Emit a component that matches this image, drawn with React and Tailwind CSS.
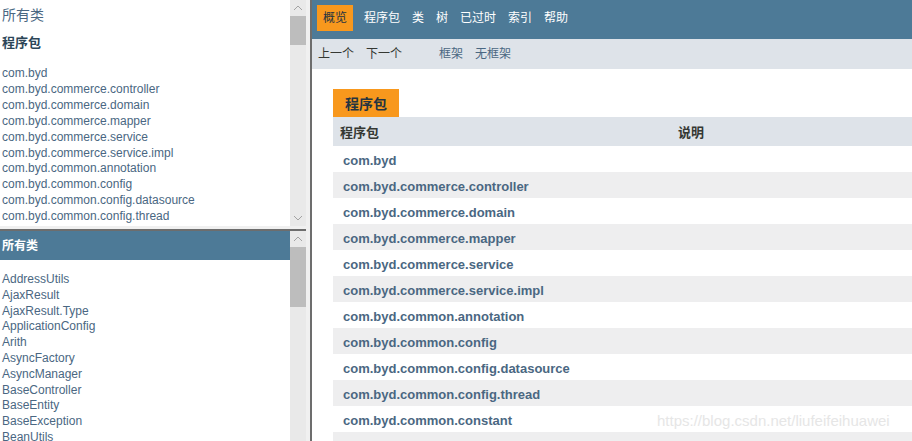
import React from "react";

const packages = [
  "com.byd",
  "com.byd.commerce.controller",
  "com.byd.commerce.domain",
  "com.byd.commerce.mapper",
  "com.byd.commerce.service",
  "com.byd.commerce.service.impl",
  "com.byd.common.annotation",
  "com.byd.common.config",
  "com.byd.common.config.datasource",
  "com.byd.common.config.thread",
];

const tablePackages = [...packages, "com.byd.common.constant"];

const classes = [
  "AddressUtils",
  "AjaxResult",
  "AjaxResult.Type",
  "ApplicationConfig",
  "Arith",
  "AsyncFactory",
  "AsyncManager",
  "BaseController",
  "BaseEntity",
  "BaseException",
  "BeanUtils",
];

function Chevron({ up }) {
  return (
    <svg width="10" height="6" viewBox="0 0 10 6" className="block">
      <path
        d={up ? "M1 5 L5 1 L9 5" : "M1 1 L5 5 L9 1"}
        fill="none"
        stroke="#a3a3a3"
        strokeWidth="1"
      />
    </svg>
  );
}

function Scrollbar({ thumbTop, thumbHeight }) {
  return (
    <div className="w-[16px] h-full bg-[#e9e9e9] flex flex-col shrink-0">
      <div className="h-[16px] flex items-center justify-center shrink-0">
        <Chevron up />
      </div>
      <div className="flex-1 flex flex-col">
        <div className="shrink-0" style={{ height: thumbTop }} />
        <div className="bg-[#bdbdbd] shrink-0" style={{ height: thumbHeight }} />
        <div className="flex-1" />
      </div>
      <div className="h-[16px] flex items-center justify-center shrink-0">
        <Chevron />
      </div>
    </div>
  );
}

export default function App() {
  return (
    <div className="w-[912px] h-[441px] flex overflow-hidden bg-white font-['Liberation_Sans','Noto_Sans_CJK_SC',sans-serif]">
      {/* Left column */}
      <div className="w-[306px] h-full flex flex-col shrink-0">
        {/* Package list frame */}
        <div className="h-[226px] flex shrink-0">
          <div className="w-[290px] overflow-hidden bg-white pl-[2px]">
            <div className="mt-[5px] text-[14px] leading-[20px] text-[#4a6782]">所有类</div>
            <div className="mt-[8px] text-[13px] leading-[20px] font-bold text-[#2c4557]">程序包</div>
            <div className="mt-[13px] text-[12px] leading-[15.9px] text-[#4a6782]">
              {packages.map((p) => (
                <div key={p} className="whitespace-nowrap">{p}</div>
              ))}
            </div>
          </div>
          <Scrollbar thumbTop={0} thumbHeight={29} />
        </div>
        <div className="h-[3px] bg-[#f0f0f0] shrink-0" />
        <div className="h-[2px] bg-[#6d6d6d] shrink-0" />
        {/* Class list frame */}
        <div className="flex-1 flex min-h-0">
          <div className="w-[290px] overflow-hidden bg-white">
            <div className="h-[29px] bg-[#4d7a97] flex items-center pl-[2px] text-[12px] font-bold text-white">
              所有类
            </div>
            <div className="mt-[12px] pl-[2px] text-[12px] leading-[15.8px] text-[#4a6782]">
              {classes.map((c) => (
                <div key={c} className="whitespace-nowrap">{c}</div>
              ))}
            </div>
          </div>
          <div className="h-full flex flex-col">
            <div className="w-[16px] h-full bg-[#e9e9e9] flex flex-col">
              <div className="h-[16px] flex items-center justify-center shrink-0">
                <Chevron up />
              </div>
              <div className="h-[60px] bg-[#bdbdbd] shrink-0" />
              <div className="flex-1" />
            </div>
          </div>
        </div>
      </div>
      {/* Splitter */}
      <div className="w-[4px] h-full bg-[#f0f0f0] shrink-0" />
      <div className="w-[2px] h-full bg-[#6d6d6d] shrink-0" />
      {/* Right frame */}
      <div className="flex-1 h-full relative overflow-hidden bg-white">
        <div className="h-[39px] bg-[#4d7a97] flex items-start pt-[5px] pl-[5px] text-[12px]">
          <div className="h-[26px] px-[6px] bg-[#f8981d] text-[#253441] flex items-center mr-[5px]">概览</div>
          {["程序包", "类", "树", "已过时", "索引", "帮助"].map((t) => (
            <div key={t} className="h-[26px] px-[6px] text-white flex items-center">{t}</div>
          ))}
        </div>
        <div className="h-[30px] bg-[#dee3e9] flex items-center pl-[6px] text-[12px]">
          <span className="text-[#353833]">上一个</span>
          <span className="ml-[12px] text-[#353833]">下一个</span>
          <span className="ml-[37px] text-[#4a6782]">框架</span>
          <span className="ml-[12px] text-[#4a6782]">无框架</span>
        </div>
        <div className="pt-[20px] pl-[21px]">
          <div className="w-[66px] h-[28px] bg-[#f8981d] flex items-center pl-[12px] pt-[2px] text-[14px] font-bold text-[#253441]">
            程序包
          </div>
          <div className="h-[29px] bg-[#dee3e9] flex items-center pt-[3px] text-[13px] font-bold text-[#353833]">
            <div className="w-[345px] pl-[7px]">程序包</div>
            <div>说明</div>
          </div>
          {tablePackages.map((p, i) => (
            <div
              key={p}
              className={`h-[26px] flex items-center pl-[10px] pt-[3px] text-[13px] font-bold text-[#4a6782] whitespace-nowrap ${
                i % 2 === 0 ? "bg-white" : "bg-[#eeeeef]"
              }`}
            >
              {p}
            </div>
          ))}
          <div className="h-[26px] bg-[#eeeeef]" />
        </div>
        <div className="absolute left-[345px] top-[410px] text-[15px] text-[#e6e6e6] whitespace-nowrap">
          https://blog.csdn.net/liufeifeihuawei
        </div>
      </div>
    </div>
  );
}
